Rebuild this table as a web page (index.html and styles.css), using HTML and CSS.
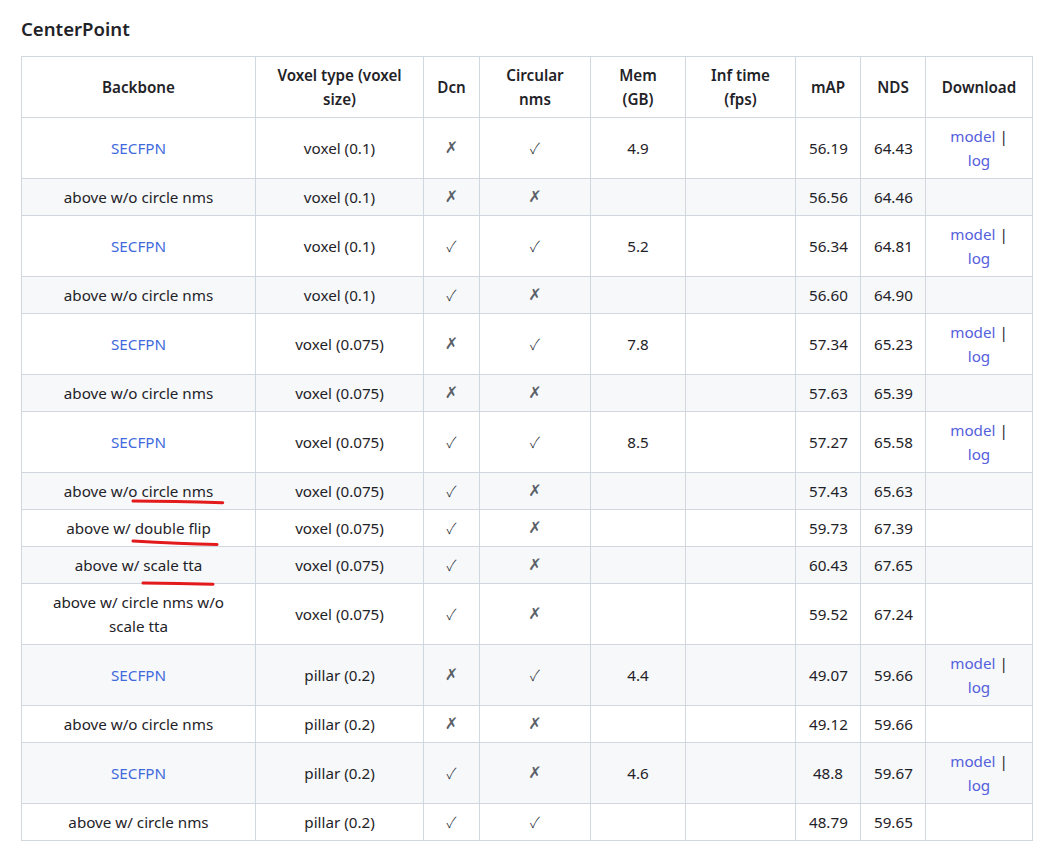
FILE: index.html
```html
<!DOCTYPE html>
<html lang="en">
<head>
<meta charset="utf-8">
<title>CenterPoint</title>
<link rel="stylesheet" href="styles.css">
</head>
<body>
<div class="page">
  <h3 class="title">CenterPoint</h3>
  <table class="results">
    <colgroup>
      <col class="c-backbone"><col class="c-voxel"><col class="c-dcn"><col class="c-nms"><col class="c-mem"><col class="c-inf"><col class="c-map"><col class="c-nds"><col class="c-dl">
    </colgroup>
    <thead>
      <tr>
        <th>Backbone</th><th>Voxel type (voxel size)</th><th>Dcn</th><th>Circular nms</th><th>Mem (GB)</th><th>Inf time (fps)</th><th>mAP</th><th>NDS</th><th>Download</th>
      </tr>
    </thead>
    <tbody>
      <tr><td><a href="#">SECFPN</a></td><td>voxel (0.1)</td><td class="no">✗</td><td class="yes">✓</td><td>4.9</td><td></td><td>56.19</td><td>64.43</td><td><a class="dl" href="#">model</a> <span class="pipe">|</span><br><a class="dl" href="#">log</a></td></tr>
      <tr><td>above w/o circle nms</td><td>voxel (0.1)</td><td class="no">✗</td><td class="no">✗</td><td></td><td></td><td>56.56</td><td>64.46</td><td></td></tr>
      <tr><td><a href="#">SECFPN</a></td><td>voxel (0.1)</td><td class="yes">✓</td><td class="yes">✓</td><td>5.2</td><td></td><td>56.34</td><td>64.81</td><td><a class="dl" href="#">model</a> <span class="pipe">|</span><br><a class="dl" href="#">log</a></td></tr>
      <tr><td>above w/o circle nms</td><td>voxel (0.1)</td><td class="yes">✓</td><td class="no">✗</td><td></td><td></td><td>56.60</td><td>64.90</td><td></td></tr>
      <tr><td><a href="#">SECFPN</a></td><td>voxel (0.075)</td><td class="no">✗</td><td class="yes">✓</td><td>7.8</td><td></td><td>57.34</td><td>65.23</td><td><a class="dl" href="#">model</a> <span class="pipe">|</span><br><a class="dl" href="#">log</a></td></tr>
      <tr><td>above w/o circle nms</td><td>voxel (0.075)</td><td class="no">✗</td><td class="no">✗</td><td></td><td></td><td>57.63</td><td>65.39</td><td></td></tr>
      <tr><td><a href="#">SECFPN</a></td><td>voxel (0.075)</td><td class="yes">✓</td><td class="yes">✓</td><td>8.5</td><td></td><td>57.27</td><td>65.58</td><td><a class="dl" href="#">model</a> <span class="pipe">|</span><br><a class="dl" href="#">log</a></td></tr>
      <tr><td>above w/o <span class="mark mark-1">circle nms<svg class="stroke" viewBox="0 0 100 8" preserveAspectRatio="none"><path d="M0,2 Q45,2.2 100,3.8"/></svg></span></td><td>voxel (0.075)</td><td class="yes">✓</td><td class="no">✗</td><td></td><td></td><td>57.43</td><td>65.63</td><td></td></tr>
      <tr><td>above w/ <span class="mark mark-2">double flip<svg class="stroke" viewBox="0 0 100 8" preserveAspectRatio="none"><path d="M0,2 Q55,4.8 100,5.4"/></svg></span></td><td>voxel (0.075)</td><td class="yes">✓</td><td class="no">✗</td><td></td><td></td><td>59.73</td><td>67.39</td><td></td></tr>
      <tr><td>above w/ <span class="mark mark-3">scale tta<svg class="stroke" viewBox="0 0 100 8" preserveAspectRatio="none"><path d="M0,2 Q50,2.4 100,3.3"/></svg></span></td><td>voxel (0.075)</td><td class="yes">✓</td><td class="no">✗</td><td></td><td></td><td>60.43</td><td>67.65</td><td></td></tr>
      <tr><td>above w/ circle nms w/o scale tta</td><td>voxel (0.075)</td><td class="yes">✓</td><td class="no">✗</td><td></td><td></td><td>59.52</td><td>67.24</td><td></td></tr>
      <tr><td><a href="#">SECFPN</a></td><td>pillar (0.2)</td><td class="no">✗</td><td class="yes">✓</td><td>4.4</td><td></td><td>49.07</td><td>59.66</td><td><a class="dl" href="#">model</a> <span class="pipe">|</span><br><a class="dl" href="#">log</a></td></tr>
      <tr><td>above w/o circle nms</td><td>pillar (0.2)</td><td class="no">✗</td><td class="no">✗</td><td></td><td></td><td>49.12</td><td>59.66</td><td></td></tr>
      <tr><td><a href="#">SECFPN</a></td><td>pillar (0.2)</td><td class="yes">✓</td><td class="no">✗</td><td>4.6</td><td></td><td>48.8</td><td>59.67</td><td><a class="dl" href="#">model</a> <span class="pipe">|</span><br><a class="dl" href="#">log</a></td></tr>
      <tr><td>above w/ circle nms</td><td>pillar (0.2)</td><td class="yes">✓</td><td class="yes">✓</td><td></td><td></td><td>48.79</td><td>59.65</td><td></td></tr>
    </tbody>
  </table>
</div>
</body>
</html>
```

FILE: styles.css
```css
html, body {
  margin: 0;
  padding: 0;
  background: #ffffff;
}

body {
  font-family: "Noto Sans", "Open Sans", "Liberation Sans", sans-serif;
  font-size: 15.2px;
  line-height: 1.5;
  color: #1f2328;
}

.page {
  padding: 16px 21px 12px 21px;
}

.title {
  margin: 0 0 15px 0;
  font-size: 18.6px;
  line-height: 25px;
  font-weight: 600;
  color: #1f2328;
}

.results {
  border-collapse: collapse;
  border-spacing: 0;
  table-layout: fixed;
  width: 1012px;
}

.c-backbone { width: 234px; }
.c-voxel { width: 168px; }
.c-dcn { width: 56px; }
.c-nms { width: 111px; }
.c-mem { width: 95px; }
.c-inf { width: 110px; }
.c-map { width: 65px; }
.c-nds { width: 65px; }
.c-dl { width: 107px; }

.results th,
.results td {
  border: 1px solid #d0d7de;
  padding: 6px 13px;
  text-align: center;
  vertical-align: middle;
  line-height: 24px;
}

.results th {
  font-weight: 600;
}

.results tbody tr {
  background: #ffffff;
}

.results tbody tr:nth-child(2n) {
  background: #f6f8fa;
}

.results a {
  color: #4169dc;
  text-decoration: none;
}

.results a.dl {
  color: #5560dc;
}

.pipe {
  color: #1f2328;
}

.yes {
  font-family: "Noto Sans CJK SC", "DejaVu Sans", sans-serif;
  font-size: 15px;
  font-weight: 300;
  color: #2a2f36;
}

.no {
  font-family: "DejaVu Sans", sans-serif;
  font-size: 16px;
  font-weight: 400;
  color: #5a6068;
}

.mark {
  position: relative;
  display: inline-block;
}

.stroke {
  position: absolute;
  height: 8px;
  overflow: visible;
}

.stroke path {
  fill: none;
  stroke: #e31a1c;
  stroke-width: 3;
  stroke-linecap: round;
  vector-effect: non-scaling-stroke;
}

.mark-1 .stroke { left: -8px; top: 20px; width: calc(100% + 18px); }
.mark-2 .stroke { left: -2px; top: 23px; width: calc(100% + 8px); }
.mark-3 .stroke { left: 0; top: 28px; width: calc(100% + 11px); }
```
